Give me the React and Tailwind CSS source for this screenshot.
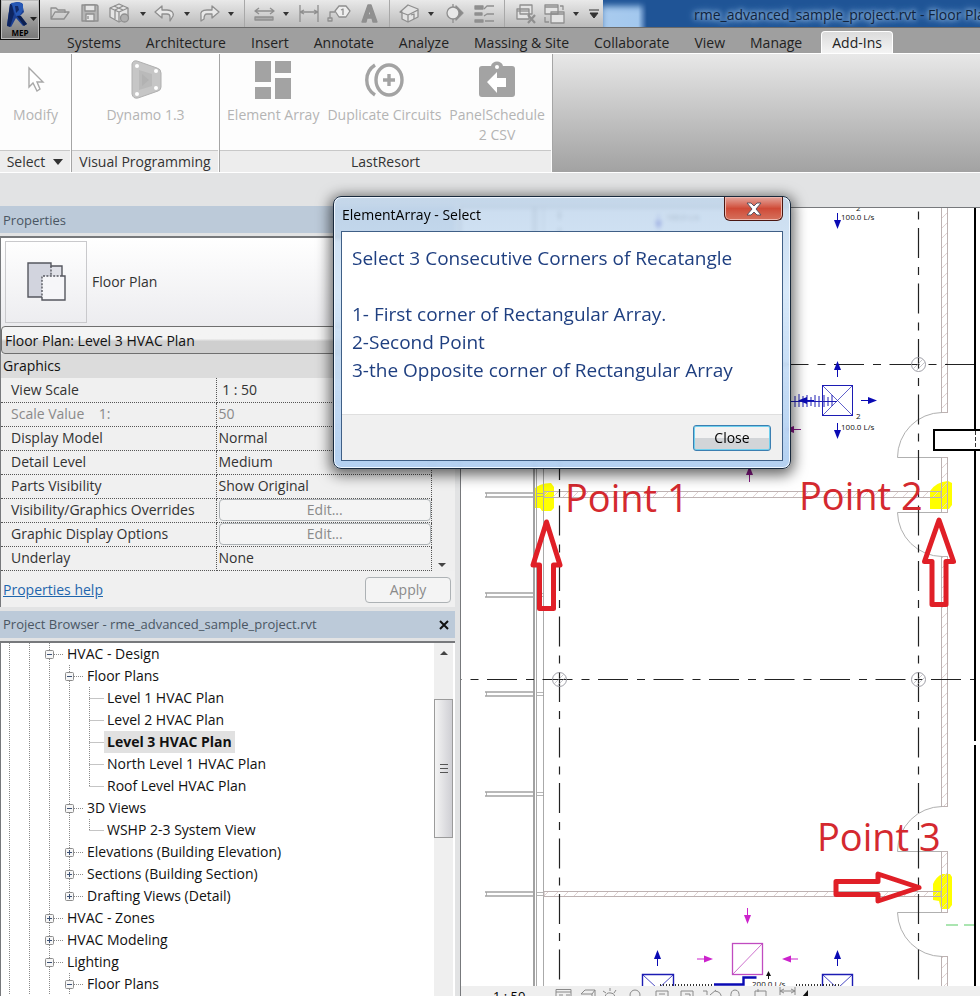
import React from 'react';

/* ---------- quick access toolbar ---------- */

const glyphs = {
  open: (
    <path d="M5 19V8h5l2 2h7v3M5 19l4-7h14l-5 7z" />
  ),
  save: (
    <>
      <path d="M6 5h15l1 1v15H6z" fill="#b4b4b4" />
      <path d="M9 5h10v6H9zM10 14h8v7h-8z" fill="#e6e6e6" />
      <path d="M12 16v3" />
    </>
  ),
  cube: (
    <>
      <path d="M13 4l9 4v9l-9 5-9-5V8z" fill="#e4e4e4" />
      <path d="M4 8l9 4 9-4M13 12v9M8 6l9 4M17 6L9 10v9" />
      <circle cx="18.500" cy="18" r="4" fill="#b0b0b0" />
    </>
  ),
  undo: <path d="M4 12l7-6v4h5c5 0 7 3 6 6l-3 5v-4c0-2-1-3-3-3h-5v4z" fill="#e8e8e8" />,
  redo: <path d="M24 12l-7-6v4h-5c-5 0-7 2-6 6v5l3-2c0-4 1-5 3-5h5v4z" fill="#e8e8e8" />,
  measure: (
    <>
      <path d="M6 11h17M9 8l-4 3 4 3M20 8l4 3-4 3" />
      <path d="M5 17h18v3H5z" fill="#aaa" />
    </>
  ),
  dimension: <path d="M5 5v17M23 5v17M5 12h18M9 10l-4 2 4 2M19 10l4 2-4 2" />,
  tag: (
    <>
      <path d="M14 6h7l4 5-4 6h-7l-4-6z" fill="#eee" />
      <path d="M16 10l2-1v6M3 18h4v3H3zM5 18v-6h5" />
    </>
  ),
  text: <path d="M7 22L13 5h3l6 17h-4l-1-4h-5l-1 4zM13 15h3l-1.500-6z" fill="#909090" />,
  house: (
    <>
      <path d="M5 12l8-7 10 4v8l-10 5-6-3v-7z" fill="#e4e4e4" />
      <path d="M5 12l8 3 10-5M13 15v7M16 15l3-1v5" />
    </>
  ),
  section: (
    <>
      <path d="M16 6l7 7-7 7z" fill="#888" />
      <circle cx="13" cy="13" r="6" fill="#e8e8e8" />
      <path d="M13 4v3M13 19v4" />
    </>
  ),
  lines: (
    <>
      <path d="M5 6h8v3H5zM5 13h7v2H5zM5 20h8v2H5z" fill="#909090" />
      <path d="M14 9l3-3h7M14 16l3-2h7M15 21h9" />
    </>
  ),
  closeWin: (
    <>
      <path d="M9 5h12v9H9zM6 9h12v10H6z" fill="#e4e4e4" />
      <path d="M6 11h12" />
      <path d="M17 15l7 8M24 15l-7 8" strokeWidth="2.200" />
    </>
  ),
  switchWin: (
    <>
      <path d="M5 5h13v9H5zM11 12h13v11H11z" fill="#e4e4e4" />
      <path d="M5 7h13M11 14h13M20 6h3v4M5 17v5h4" />
    </>
  ),
};

function Tool({ name, label, narrow }) {
  return (
    <button aria-label={label} className={narrow ? 'flex h-7 w-7 shrink-0 justify-center' : 'flex h-7 w-[30px] shrink-0 justify-center'}>
      <svg viewBox="0 0 28 28" className="h-7 w-7" fill="none" stroke="#8f8f8f" strokeWidth="1.3" strokeLinejoin="round">
        {glyphs[name]}
      </svg>
    </button>
  );
}

function Caret({ label }) {
  return (
    <button aria-label={label} className="flex h-7 w-4 shrink-0 items-center justify-center">
      <svg viewBox="0 0 6 4" className="h-1 w-1.5">
        <path d="M0 0h6L3 4z" fill="#333" />
      </svg>
    </button>
  );
}

const Divider = () => <span className="mx-[5px] h-7 w-px shrink-0 bg-[#a8a8a8]" />;

function AppButton() {
  return (
    <button
      aria-label="Application menu"
      className="flex h-10 w-10 flex-col border border-t-0 border-[#111] bg-linear-to-b from-[#dedede] via-[#9b9b9b] to-[#777] shadow-[inset_0_0_0_1px_#bbb]"
    >
      <span className="flex h-7 items-center pl-1">
        <svg viewBox="0 0 34 28" className="h-7 w-[34px]">
          <path d="M5 4l7-2 5 1 2 9-4 4 7 8-4 2-7-8-5 9-4-2z" fill="#1b3f92" />
          <path d="M6 3l8-1 4 2v6l-3 5-4 1z" fill="#2657b4" />
          <path d="M5 4l2 1 2 9-4 13-3-1z" fill="#0e2560" />
          <path d="M10 6h3l1 4-3 3z" fill="#122a68" />
          <path d="M12 16l4 0 6 8-3 2z" fill="#0b1f50" />
          <path d="M25 17h7l-3.500 4z" fill="#222" />
        </svg>
      </span>
      <span className="w-full text-center text-[8px] leading-[10px] font-bold text-black">MEP</span>
    </button>
  );
}

function TopBar() {
  const tabs = ['Systems', 'Architecture', 'Insert', 'Annotate', 'Analyze', 'Massing & Site', 'Collaborate', 'View', 'Manage'];
  return (
    <header className="flex shrink-0 bg-[#9f9f9f]">
      <AppButton />
      <div className="min-w-0 flex-1">
        <div className="flex h-7 overflow-hidden border-b border-[#6a6a6a] bg-[#1f5496]">
          <div className="flex h-7 w-[563px] shrink-0 items-center bg-linear-to-b from-[#e9e9e9] to-[#b9b9b9] pl-[5px]">
            <Tool name="open" label="Open" />
            <Tool name="save" label="Save" />
            <Tool name="cube" label="Synchronize" />
            <Caret label="Synchronize options" />
            <Tool name="undo" label="Undo" narrow />
            <Caret label="Undo list" />
            <Tool name="redo" label="Redo" narrow />
            <Caret label="Redo list" />
            <Divider />
            <Tool name="measure" label="Measure" narrow />
            <Caret label="Measure options" />
            <Tool name="dimension" label="Aligned dimension" />
            <Tool name="tag" label="Tag by category" />
            <Tool name="text" label="Text" />
            <Divider />
            <Tool name="house" label="Default 3D view" narrow />
            <Caret label="3D view options" />
            <Tool name="section" label="Section" />
            <Tool name="lines" label="Thin lines" />
            <Divider />
            <Tool name="closeWin" label="Close hidden windows" />
            <Tool name="switchWin" label="Switch windows" narrow />
            <Caret label="Window list" />
            <button aria-label="Customize toolbar" className="ml-1 shrink-0">
              <svg viewBox="0 0 12 10" className="h-2.5 w-3">
                <path d="M1 1h10M2 4h8L6 9z" fill="#333" stroke="#333" />
              </svg>
            </button>
          </div>
          <div className="h-7 w-11 shrink-0 bg-linear-to-r from-[#a9cbee] via-[#a3c8ee] via-80% to-[#1f5496] shadow-[inset_0_8px_6px_-2px_#1f5496]" />
          <h1 className="ml-[47px] text-sm leading-[30px] whitespace-nowrap text-[#10233c] [text-shadow:0_0_6px_#9cc0e6,0_0_10px_#8fb6e0,0_0_4px_#7ea8d8]">
            rme_advanced_sample_project.rvt - Floor Plan: Level 3 HVAC Plan
          </h1>
        </div>
        <nav className="flex h-[25px] items-end gap-px pl-[15px]">
          {tabs.map((t) => (
            <button key={t} className="h-[22px] px-3 text-sm leading-6 whitespace-nowrap text-[#222]">
              {t}
            </button>
          ))}
          <button className="ml-1.5 h-[22px] rounded-t-sm border border-b-0 border-white bg-linear-to-b from-[#dcdcdc] to-[#f4f4f4] px-2.5 text-sm leading-[22px] whitespace-nowrap text-[#222]">
            Add-Ins
          </button>
        </nav>
      </div>
    </header>
  );
}

/* ---------- ribbon ---------- */

function RibbonButton({ icon, children }) {
  return (
    <button className="flex flex-col items-center text-sm leading-5 whitespace-nowrap text-[#b4b4b4]">
      <span className="flex h-[51px] w-12 items-center justify-center">{icon}</span>
      {children}
    </button>
  );
}

function Panel({ title, width, children }) {
  return (
    <section className={`flex shrink-0 flex-col border-r border-[#a5a5a5] bg-[#fdfdfd] ${width}`}>
      <div className="flex flex-1 justify-center gap-2">{children}</div>
      <h2 className="mr-px flex h-[22px] items-center justify-center gap-2 border-t border-[#c8c8c8] bg-[#ededed] text-sm leading-5 whitespace-nowrap text-[#333]">
        {title}
      </h2>
    </section>
  );
}

function Ribbon() {
  return (
    <div className="flex h-[120px] shrink-0 border-y border-white bg-linear-to-b from-[#e8e8e8] to-[#a2a2a2]">
      <Panel
        width="w-[72px]"
        title={
          <>
            Select
            <svg viewBox="0 0 10 6" className="h-1.5 w-2.5">
              <path d="M0 0h10L5 6z" fill="#333" />
            </svg>
          </>
        }
      >
        <RibbonButton
          icon={
            <svg viewBox="0 0 18 28" className="h-7 w-[18px]" fill="#fff" stroke="#a8a8a8" strokeWidth="1.4">
              <path d="M2 2v19l4-4 4 8 3-2-3-7h6z" />
            </svg>
          }
        >
          Modify
        </RibbonButton>
      </Panel>
      <Panel width="w-[148px]" title="Visual Programming">
        <RibbonButton
          icon={
            <svg viewBox="0 0 32 40" className="h-10 w-8">
              <path d="M2 4q1-4 5-3l20 7q4 1 4 5v14q0 3-3 4L8 38q-5 1-6-4z" fill="#c6c6c6" stroke="#b0b0b0" />
              <path d="M9 10l13 4v12L9 30z" fill="#bababa" />
              <path d="M12 14l7 6-7 6z" fill="#b2b2b2" />
              <g fill="#fff">
                <circle cx="7" cy="6" r="2" />
                <circle cx="26" cy="11" r="2" />
                <circle cx="26" cy="28" r="2" />
                <circle cx="7" cy="34" r="2" />
              </g>
            </svg>
          }
        >
          Dynamo 1.3
        </RibbonButton>
      </Panel>
      <Panel width="w-[333px]" title="LastResort">
        <RibbonButton
          icon={
            <svg viewBox="0 0 38 38" className="size-[38px]" fill="#a3a3a3">
              <path d="M1 0h16v21H1zM1 26h16v12H1zM21 0h16v12H21zM21 17h16v21H21z" />
            </svg>
          }
        >
          Element Array
        </RibbonButton>
        <RibbonButton
          icon={
            <svg viewBox="0 0 40 36" className="h-9 w-10" fill="none" stroke="#a3a3a3" strokeWidth="3.4">
              <ellipse cx="25" cy="18" rx="13" ry="15" />
              <path d="M25 12v12M19 18h12M11 3C0 10 0 26 11 33" />
            </svg>
          }
        >
          Duplicate Circuits
        </RibbonButton>
        <RibbonButton
          icon={
            <svg viewBox="0 0 38 38" className="size-[38px]">
              <path d="M4 5h9c1-6 11-6 12 0h9q3 0 3 3v25q0 3-3 3H4q-3 0-3-3V8q0-3 3-3z" fill="#a3a3a3" />
              <circle cx="19" cy="6" r="2" fill="#fff" />
              <path d="M9 21l10-10v6h9v9h-9v6z" fill="#fff" />
            </svg>
          }
        >
          PanelSchedule
          <br />2 CSV
        </RibbonButton>
      </Panel>
    </div>
  );
}

/* ---------- properties ---------- */

const properties = [
  ['View Scale', '\u00a01 : 50'],
  ['Scale Value \u00a0\u00a0 1:', '50', 'text-[#8a8a8a]'],
  ['Display Model', 'Normal'],
  ['Detail Level', 'Medium'],
  ['Parts Visibility', 'Show Original'],
  ['Visibility/Graphics Overrides', null],
  ['Graphic Display Options', null],
  ['Underlay', 'None'],
];

function Properties() {
  return (
    <section className="shrink-0">
      <h2 className="h-[27px] bg-[#bccad9] pl-[3px] text-[13px] leading-7 text-[#4a5663]">Properties</h2>
      <div className="mt-[3px] border-t-2 border-l border-[#77797c] bg-[#f0f0f0]">
        <div className="flex h-[88px] items-center gap-[5px] bg-linear-to-b from-white to-[#ececef] pl-1 text-sm text-[#333]">
          <span className="flex size-[82px] items-center justify-center border border-[#c9c9cc]">
            <svg viewBox="0 0 40 40" className="size-10" stroke="#55575f" strokeWidth="1.4">
              <path d="M24 4h12v30H24z" fill="#e0e1e8" stroke="none" />
              <path d="M2 1h23v34H2z" fill="#d2d4de" stroke="none" />
              <path d="M16 14h23v24H16z" fill="#f6f6f9" stroke="none" />
              <path d="M16 35H2V1h23v3h11v10" fill="none" />
              <path d="M36 14h3v24H16v-3" fill="none" />
              <path d="M25 4v10M36 14H16v21" fill="none" strokeDasharray="2 1.4" />
            </svg>
          </span>
          Floor Plan
        </div>
        <select
          aria-label="Type selector"
          className="block h-7 w-full appearance-none rounded-sm border border-[#6f6f6f] bg-linear-to-b from-[#f4f4f4] from-45% to-[#cfcfcf] to-55% pt-0.5 pl-[3px] text-sm text-[#111]"
        >
          <option>Floor Plan: Level 3 HVAC Plan</option>
        </select>
        <div className="flex">
          <table className="w-[431px] table-fixed border-collapse text-sm leading-[22px] text-[#333]">
            <colgroup>
              <col className="w-[215px]" />
              <col />
            </colgroup>
            <thead>
              <tr>
                <th colSpan={2} className="h-6 bg-[#dcdcdc] p-0 pl-0.5 text-left font-normal text-[#111]">
                  Graphics
                </th>
              </tr>
            </thead>
            <tbody>
              {properties.map(([name, value, tone]) => (
                <tr key={name} className={tone}>
                  <td className="h-6 border-r border-b border-dotted border-[#555] p-0 pl-2.5 whitespace-pre">{name}</td>
                  <td className="h-6 border-r border-b border-dotted border-[#555] p-0 pl-0.5">
                    {value ?? (
                      <button
                        aria-label={`Edit ${name}`}
                        className="block h-[22px] w-full rounded-sm border border-[#adb2b5] bg-[#f4f4f4] text-sm leading-5 text-[#8a8a8a]"
                      >
                        Edit...
                      </button>
                    )}
                  </td>
                </tr>
              ))}
            </tbody>
          </table>
          <div className="flex flex-1 items-end justify-center bg-[#efefef] pr-1 pb-1">
            <svg viewBox="0 0 8 4" className="h-1 w-2">
              <path d="M0 0h8L4 4z" fill="#444" />
            </svg>
          </div>
        </div>
        <div className="flex h-9 items-center justify-between pt-0.5 pr-1 pl-0.5 text-sm">
          <a href="#help" className="text-[#1f66ad] underline">
            Properties help
          </a>
          <button className="h-[26px] w-[86px] rounded-sm border border-[#adb2b5] bg-[#f4f4f4] text-[#8a8a8a]">Apply</button>
        </div>
      </div>
    </section>
  );
}

/* ---------- project browser ---------- */

const cells = {
  line: ['M9.5 0V22'],
  tee: ['M9.5 0V22', 'M9.5 11.5H24'],
  last: ['M9.5 0V11', 'M9.5 11.5H24'],
  minus: ['M9.5 0V22', 'M14 11.5H24'],
  plus: ['M9.5 0V22', 'M14 11.5H24'],
  plusLast: ['M9.5 0V8', 'M14 11.5H24'],
};

function Cell({ kind, wide }) {
  const box = kind === 'minus' || kind.startsWith('plus');
  return (
    <svg className={wide ? 'h-[22px] w-6 shrink-0' : 'h-[22px] w-5 shrink-0'} fill="none">
      {cells[kind].map((d) => (
        <path key={d} d={d} stroke="#8a8a8a" strokeDasharray="1 1" />
      ))}
      {box && (
        <>
          <rect x="5.5" y="7.5" width="8" height="8" rx="1" fill="#f6f6f6" stroke="#8d8d8d" />
          <path d={kind === 'minus' ? 'M7 11.5h5' : 'M7 11.5h5M9.5 9v5'} stroke="#3b5074" />
        </>
      )}
    </svg>
  );
}

const tree = [
  ['HVAC - Design', 'line', 'line', 'minus'],
  ['Floor Plans', 'line', 'line', 'line', 'minus'],
  ['Level 1 HVAC Plan', 'line', 'line', 'line', 'line', 'tee'],
  ['Level 2 HVAC Plan', 'line', 'line', 'line', 'line', 'tee'],
  ['Level 3 HVAC Plan', 'line', 'line', 'line', 'line', 'tee'],
  ['North Level 1 HVAC Plan', 'line', 'line', 'line', 'line', 'tee'],
  ['Roof Level HVAC Plan', 'line', 'line', 'line', 'line', 'last'],
  ['3D Views', 'line', 'line', 'line', 'minus'],
  ['WSHP 2-3 System View', 'line', 'line', 'line', 'line', 'last'],
  ['Elevations (Building Elevation)', 'line', 'line', 'line', 'plus'],
  ['Sections (Building Section)', 'line', 'line', 'line', 'plus'],
  ['Drafting Views (Detail)', 'line', 'line', 'line', 'plusLast'],
  ['HVAC - Zones', 'line', 'line', 'plus'],
  ['HVAC Modeling', 'line', 'line', 'plus'],
  ['Lighting', 'line', 'line', 'minus'],
  ['Floor Plans', 'line', 'line', 'line', 'minus'],
];

function ProjectBrowser() {
  return (
    <section className="mt-1 flex min-h-0 flex-1 flex-col">
      <h2 className="flex h-[27px] shrink-0 items-center justify-between bg-[#bccad9] pt-0.5 pr-1.5 pl-[3px] text-[13px] text-[#4a5663]">
        Project Browser - rme_advanced_sample_project.rvt
        <button aria-label="Close project browser">
          <svg viewBox="0 0 10 10" className="size-2.5" stroke="#111" strokeWidth="2">
            <path d="M1 1l8 8M9 1L1 9" />
          </svg>
        </button>
      </h2>
      <div className="mt-[3px] flex min-h-0 flex-1 overflow-hidden border-t-2 border-l border-[#77797c] bg-white">
        <ul className="-ml-px min-w-0 flex-1">
          {tree.map(([label, ...guides], i) => (
            <li key={i} className="flex h-[22px] items-center text-sm leading-[22px] whitespace-nowrap text-[#111]">
              {guides.map((kind, k) => (
                <Cell key={k} kind={kind} wide={k === guides.length - 1} />
              ))}
              <span className={label === 'Level 3 HVAC Plan' ? 'bg-[#e1e1e1] px-[3px] font-bold' : 'px-[3px]'}>{label}</span>
            </li>
          ))}
        </ul>
        <div className="mr-0.5 flex w-[19px] flex-col items-center bg-[#efefef]">
          <div className="flex h-14 items-start pt-2">
            <svg viewBox="0 0 8 4" className="h-1 w-2">
              <path d="M0 4h8L4 0z" fill="#444" />
            </svg>
          </div>
          <div className="flex h-[139px] w-full flex-col items-center justify-center gap-[3px] border border-[#9b9b9b] bg-linear-to-r from-[#f4f4f4] to-[#cfcfd4]">
            <i className="h-px w-2 bg-[#555]" />
            <i className="h-px w-2 bg-[#555]" />
            <i className="h-px w-2 bg-[#555]" />
          </div>
        </div>
      </div>
    </section>
  );
}

/* ---------- drawing ---------- */

const turns = {
  up: 'rotate(0)',
  right: 'rotate(90)',
  down: 'rotate(180)',
  left: 'rotate(270)',
};

/* Air flow arrow; x and y are the tip. */
function Flow({ x, y, dir, color = '#0a0ab4' }) {
  return (
    <g transform={`translate(${x} ${y}) ${turns[dir]}`}>
      <path d="M0 0l3.5 9h-7z" fill={color} />
      <path d="M0 8v8" stroke={color} />
    </g>
  );
}

function Wall({ x, y, w, h }) {
  return <rect x={x} y={y} width={w} height={h} fill="url(#hatch)" stroke="#bdb2b2" strokeWidth="1" />;
}

function Canvas() {
  const dash = '30 9 8 8.5';
  return (
    <svg className="min-h-0 w-full flex-1 bg-white" role="img" aria-label="Level 3 HVAC floor plan">
      <defs>
        <pattern id="hatch" width="10" height="10" patternUnits="userSpaceOnUse">
          <path d="M0 10L10 0" stroke="#e0d2d2" />
        </pattern>
      </defs>
      <g transform="translate(-461 -208)" fill="none" fontFamily="'Open Sans', sans-serif">
        {/* highlighted corners */}
        <g fill="#ffff00">
          <path d="M533 490q6-7 18-7l3 4v21l-3 3h-9l-2-3h-6z" />
          <path d="M930 491q6-9 18-10l4 2v22l-3 4h-19z" />
          <path d="M933 884q3-7 9-10h8l2 3v28l-3 4h-8l-2-8-6-1z" />
        </g>

        {/* curtain wall on the left */}
        <path d="M534 208V990" stroke="#a2a2a2" strokeWidth="2" />
        <path d="M536.5 208V990M543.5 208V990" stroke="#aaa" />
        {[495, 595, 694, 794, 894].map((y) => (
          <g key={y} stroke="#a2a2a2">
            <path d={`M485 ${y - 2}H534M485 ${y + 2}H534`} strokeWidth="1.6" />
            <path d={`M486.5 ${y - 2}v4M537 ${y - 1.5}h7M537 ${y + 1.5}h7`} strokeWidth="0.8" />
          </g>
        ))}

        {/* interior walls */}
        <Wall x={544} y={491.5} w={397} h={6} />
        <Wall x={544} y={891.5} w={397} h={5} />
        <Wall x={941.5} y={200} w={6} h={212.5} />
        <Wall x={941.5} y={457.5} w={6} h={55} />
        <Wall x={941.5} y={556.5} w={6} h={250} />
        <Wall x={941.5} y={851.5} w={6} h={61} />
        <Wall x={941.5} y={956.5} w={6} h={40} />
        <g stroke="#b0b0b0">
          <path d="M942 412.5A45 45 0 0 0 897.5 457.5H942" />
          <path d="M942 512.5H897.5A45 45 0 0 0 942 556.5" />
          <path d="M942 806.5A45 45 0 0 0 897.5 851.5H942" />
          <path d="M942 912.5H897.5A45 45 0 0 0 942 956.5" />
        </g>

        {/* grid lines */}
        <g stroke="#222" strokeWidth="1.2" strokeDasharray={dash}>
          <path d="M559.5 172.5V981" />
          <path d="M918.5 172.5V981" />
          <path d="M431.5 679.5H976" />
          <path d="M445.5 364.5H976" />
        </g>
        <g stroke="#a0a0a8">
          {[[559.5, 679.5], [918.5, 364.5], [918.5, 679.5]].map(([x, y]) => (
            <g key={`${x}-${y}`}>
              <circle cx={x} cy={y} r="7" />
              <path d={`M${x - 5} ${y + 4}l9-9M${x - 2} ${y + 6}l8-8`} strokeWidth="0.6" />
            </g>
          ))}
        </g>

        {/* outer wall */}
        <path d="M975 208V741M975 745V990" stroke="#000" strokeWidth="2" />
        <rect x="934" y="430" width="60" height="20" fill="#fff" stroke="#000" strokeWidth="2" />
        <path d="M975.5 431v18" stroke="#333" strokeDasharray="4 2" />
        <path d="M946 925h12M964 925h10" stroke="#90dd98" strokeWidth="1.5" />

        {/* supply diffusers */}
        <g stroke="#1c1cb4">
          <rect x="822.5" y="385.5" width="30" height="30" />
          <path d="M823 386l29 29M852 386l-29 29" strokeWidth="0.7" />
          <path d="M790 401.5h47M795 396v11M799 394v13M803 396v11M807 395v12M811 397v9M815 395v12M819 396v11M824 395v12M828 397v9M832 395v11" />
          <path d="M642.5 990V974.5h31V990M822.5 990V974.5h30V990" strokeWidth="1.4" />
          <path d="M643 975l14 13M673 975l-14 13M823 975l14 13M852 975l-14 13" strokeWidth="0.8" />
        </g>
        <Flow x={837.5} y={361} dir="up" />
        <Flow x={877} y={400.5} dir="right" />
        <Flow x={837.5} y={439} dir="down" />
        <Flow x={798} y={400.5} dir="left" />
        <Flow x={837.5} y={229} dir="down" />
        <Flow x={657.5} y={950} dir="up" />
        <Flow x={837.5} y={950} dir="up" />
        <Flow x={658.5} y={230} dir="down" />
        <g fill="#111" fontSize="8">
          <text x="841" y="220">100.0 L/s</text>
          <text x="841" y="430">100.0 L/s</text>
          <text x="856" y="211">2</text>
          <text x="856" y="419">2</text>
          <text x="666" y="220">100.0 L/s</text>
          <text x="752" y="987">200.0 L/s</text>
        </g>
        <path d="M768.500 971l2.500 5h-5zM768 976h1v3h-1z" fill="#111" />

        {/* return grilles */}
        <g stroke="#c04cc0">
          <rect x="732.5" y="943.5" width="30" height="31" strokeWidth="1.3" />
          <path d="M733 974l29-30" strokeWidth="0.8" />
        </g>
        <Flow x={747.5} y={924} dir="down" color="#cc22cc" />
        <Flow x={713} y={959} dir="right" color="#cc22cc" />
        <Flow x={782} y={959} dir="left" color="#cc22cc" />
        <Flow x={749.5} y={466} dir="up" color="#8a1a8a" />
        <Flow x={785} y={429.5} dir="left" color="#8a1a8a" />
        <path d="M714 984.5h29.500v-7h13" stroke="#0a0ab4" strokeWidth="2.4" />
        <path d="M660 985h54M796 985h44" stroke="#333" strokeDasharray="1 2" strokeWidth="2" />

        {/* markup */}
        <g stroke="#e01f27" strokeWidth="5" strokeLinejoin="round">
          <path d="M546.500 522L560 565H553.500V608.500H539.500V565H533Z" />
          <path d="M939 520L953.500 561.500H946V604.500H932V561.500H924.500Z" />
          <path d="M919 887.500L878 874V881.500H836V894.500H878V901Z" />
        </g>
        <g fill="#d4292f" fontSize="38" fontFamily="'Open Sans', sans-serif">
          <text x="565" y="512">Point 1</text>
          <text x="799" y="510">Point 2</text>
          <text x="817" y="851">Point 3</text>
        </g>
      </g>
    </svg>
  );
}

function ViewControlBar() {
  return (
    <div className="flex h-2.5 shrink-0 items-start overflow-hidden bg-[#efefef] pl-8 text-[13px] leading-5 text-black">
      <span className="w-[62px] shrink-0">1 : 50</span>
      <svg className="h-5 flex-1" fill="none" stroke="#8a8a8a">
        <path d="M1 3.500h15v12H1zM1 6h15M4 9h4M11 9h4" />
        <path d="M26 8l4-4h10v7M26 8h11v9M37 8l3-4" />
        <path d="M55 2v3M48 5l3 2M61 4l-2 3M50 11q1-5 6-4 5 1 3 5" />
        <circle cx="80" cy="9" r="5" />
        <path d="M101 5h12v10h-12zM104 8h6M126 5h12v10h-12zM130 8h5v4" />
        <path d="M148 5h4v4M160 5q7 1 6 7M155 9l6-5M176 12q-1-8 4-8t4 8" />
        <path d="M200 5h11v8h-11zM203 3v3M225 1v8M240 1v8M225 5h15M229 3l-4 2 4 2M236 3l4 2-4 2" />
        <path d="M253 4l-6 7h6z" fill="#111" stroke="none" />
      </svg>
    </div>
  );
}

/* ---------- dialog ---------- */

function Dialog() {
  return (
    <div
      role="dialog"
      aria-labelledby="dialog-title"
      className="absolute top-[196px] left-[333px] w-[458px] rounded-lg border border-[#18293c] bg-linear-to-b from-[#bdd3ea]/80 via-[#cde3f8]/80 via-35% to-[#b0cef0]/95 px-[7px] pb-[7px] shadow-[inset_0_0_0_1px_#eef6ff,0_3px_14px_3px_rgba(0,0,0,0.6)] backdrop-blur-[2px]"
    >
      <div className="flex h-[34px] items-start justify-between">
        <h2 id="dialog-title" className="pl-px text-sm leading-[35px] text-black">
          ElementArray - Select
        </h2>
        <button
          aria-label="Close dialog"
          className="flex h-6 w-[59px] items-center justify-center rounded-b-md border border-t-0 border-[#4a1712] bg-linear-to-b from-[#e2a49c] via-[#cf4a37] via-50% to-[#d5705c] shadow-[inset_0_0_0_1px_#eeb7ae]"
        >
          <svg viewBox="0 0 16 14" className="h-3.5 w-4">
            <path d="M1 1h4l3 3 3-3h4l-5 6 5 6h-4L8 10l-3 3H1l5-6z" fill="#fff" stroke="#4c4c5c" strokeWidth="0.9" />
          </svg>
        </button>
      </div>
      <div className="border border-[#3f5f86] bg-white">
        <p className="h-[182px] px-2.5 pt-3 text-[19px] leading-7 whitespace-pre-line text-[#1f3f80]">
          {'Select 3 Consecutive Corners of Recatangle\n\n1- First corner of Rectangular Array.\n2-Second Point\n3-the Opposite corner of Rectangular Array'}
        </p>
        <div className="flex h-[46px] items-center justify-end border-t border-[#dfdfdf] bg-[#f0f0f0] pr-[11px]">
          <button className="h-[26px] w-[78px] rounded-[3px] border border-[#3c7fb1] bg-linear-to-b from-[#f2f2f2] from-50% to-[#d2d5d8] to-50% text-sm leading-5 text-black shadow-[inset_0_0_0_1px_#6fd0ee]">
            Close
          </button>
        </div>
      </div>
    </div>
  );
}

export default function App() {
  return (
    <div className="relative flex h-screen flex-col overflow-hidden bg-[#e2e3e4] font-['Open_Sans',sans-serif]">
      <TopBar />
      <Ribbon />
      <main className="mt-[34px] flex min-h-0 flex-1 gap-[5px]">
        <div className="-mt-px flex w-[455px] shrink-0 flex-col">
          <Properties />
          <ProjectBrowser />
        </div>
        <div className="flex min-w-0 flex-1 flex-col border-t border-l border-[#77797c]">
          <Canvas />
          <ViewControlBar />
        </div>
      </main>
      <Dialog />
    </div>
  );
}
